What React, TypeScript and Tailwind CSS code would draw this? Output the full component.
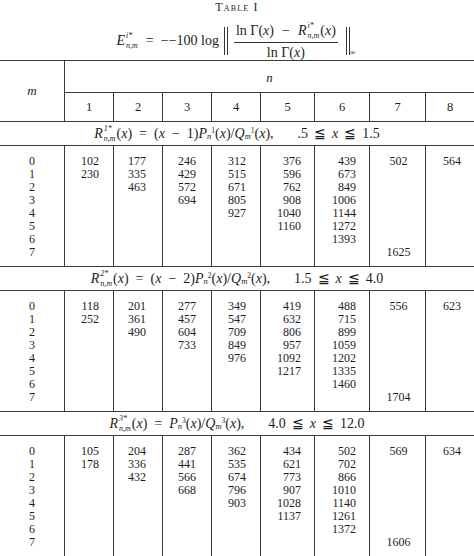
import React from 'react';

const COLS = 'grid grid-cols-[65px_49px_49px_49px_49px_54px_55px_56px_48px]';
const LINE = 'border-[#3a3a3a]';

// values per column n = 1..8, indexed by row m (null = blank)
type Col = (number | null)[];

const col = (vals: number[], last?: number): Col => {
  const out: Col = Array(8).fill(null);
  vals.forEach((v, i) => (out[i] = v));
  if (last !== undefined) out[7] = last;
  return out;
};

const SECTIONS: { key: string; cols: Col[] }[] = [
  {
    key: '1',
    cols: [
      col([102, 230]),
      col([177, 335, 463]),
      col([246, 429, 572, 694]),
      col([312, 515, 671, 805, 927]),
      col([376, 596, 762, 908, 1040, 1160]),
      col([439, 673, 849, 1006, 1144, 1272, 1393]),
      col([502], 1625),
      col([564]),
    ],
  },
  {
    key: '2',
    cols: [
      col([118, 252]),
      col([201, 361, 490]),
      col([277, 457, 604, 733]),
      col([349, 547, 709, 849, 976]),
      col([419, 632, 806, 957, 1092, 1217]),
      col([488, 715, 899, 1059, 1202, 1335, 1460]),
      col([556], 1704),
      col([623]),
    ],
  },
  {
    key: '3',
    cols: [
      col([105, 178]),
      col([204, 336, 432]),
      col([287, 441, 566, 668]),
      col([362, 535, 674, 796, 903]),
      col([434, 621, 773, 907, 1028, 1137]),
      col([502, 702, 866, 1010, 1140, 1261, 1372]),
      col([569], 1606),
      col([634]),
    ],
  },
];

// alignment of each n column, as printed
const CELL_CLASS = [
  'text-right pr-[14px]',
  'text-right pr-[16px]',
  'text-right pr-[15px]',
  'text-right pr-[14px]',
  'text-right pr-[13px]',
  'text-right pr-[13px]',
  'text-center pl-[2px]',
  'text-center pl-[4px]',
];

function Scripts({ sup, sub }: { sup: string; sub: string }) {
  return (
    <span className="mx-[1px] inline-flex flex-col align-middle text-[8px] leading-[9.5px] italic">
      <span>{sup}</span>
      <span>{sub}</span>
    </span>
  );
}

function Sub({ children }: { children: React.ReactNode }) {
  return <span className="relative top-[3px] text-[8.5px] italic">{children}</span>;
}

function Sup({ children }: { children: React.ReactNode }) {
  return <span className="relative -top-[3px] text-[7.5px]">{children}</span>;
}

function ErrorFormula() {
  return (
    <div className="flex items-center text-[14px] leading-none">
      <i>E</i>
      <Scripts sup="i*" sub="n,m" />
      <span className="mx-[7px]">=</span>
      <span>−−100 log</span>
      <span className="ml-[5px] h-[28px] w-[4px] border-x border-[#333]" />
      <span className="mx-[6px] inline-flex flex-col items-center">
        <span className="flex items-center px-[2px] pb-[2px]">
          ln Γ(<i>x</i>)<span className="mx-[8px]">−</span>
          <i>R</i>
          <Scripts sup="i*" sub="n,m" />(<i>x</i>)
        </span>
        <span className="w-full border-t border-[#333] pt-[3px] text-center">
          ln Γ(<i>x</i>)
        </span>
      </span>
      <span className="ml-[2px] h-[28px] w-[4px] border-x border-[#333]" />
      <span className="relative top-[12px] text-[8px]">∞</span>
    </div>
  );
}

function Rel() {
  return <span className="mx-[6px]">≦</span>;
}

function SectionFormula({ k }: { k: string }) {
  if (k === '1') {
    return (
      <>
        <i>R</i>
        <Scripts sup="1*" sub="n,m" />(<i>x</i>)<span className="mx-[7px]">=</span>(<i>x</i>
        <span className="mx-[7px]">−</span>1)<i>P</i>
        <Sub>n</Sub>
        <Sup>1</Sup>(<i>x</i>)/<i>Q</i>
        <Sub>m</Sub>
        <Sup>1</Sup>(<i>x</i>),
        <span className="ml-[24px]">.5</span>
        <Rel />
        <i>x</i>
        <Rel />
        1.5
      </>
    );
  }
  if (k === '2') {
    return (
      <>
        <i>R</i>
        <Scripts sup="2*" sub="n,m" />(<i>x</i>)<span className="mx-[7px]">=</span>(<i>x</i>
        <span className="mx-[7px]">−</span>2)<i>P</i>
        <Sub>n</Sub>
        <Sup>2</Sup>(<i>x</i>)/<i>Q</i>
        <Sub>m</Sub>
        <Sup>2</Sup>(<i>x</i>),
        <span className="ml-[24px]">1.5</span>
        <Rel />
        <i>x</i>
        <Rel />
        4.0
      </>
    );
  }
  return (
    <>
      <i>R</i>
      <Scripts sup="3*" sub="n,m" />(<i>x</i>)<span className="mx-[7px]">=</span>
      <i>P</i>
      <Sub>n</Sub>
      <Sup>3</Sup>(<i>x</i>)/<i>Q</i>
      <Sub>m</Sub>
      <Sup>3</Sup>(<i>x</i>),
      <span className="ml-[24px]">4.0</span>
      <Rel />
      <i>x</i>
      <Rel />
      12.0
    </>
  );
}

export default function App() {
  return (
    <div className="w-[474px] overflow-hidden bg-white font-['Liberation_Serif',serif] text-[#1d1d1d]">
      {/* caption */}
      <div className="flex h-[60px] flex-col items-center">
        <div className="mt-[1px] text-[12px] leading-[12px] tracking-[0.1em] [font-variant:small-caps]">
          Table I
        </div>
        <div className="mt-[8px] pr-[2px]">
          <ErrorFormula />
        </div>
      </div>

      {/* header */}
      <div className={`${COLS} grid-rows-[32px_28px] border-y ${LINE} text-[12.5px]`}>
        <div className={`row-span-2 flex items-center justify-center border-r ${LINE} text-[13px] italic`}>
          m
        </div>
        <div
          className={`col-span-8 flex items-center justify-center border-b ${LINE} pt-[2px] text-[13px] italic`}
        >
          n
        </div>
        {[1, 2, 3, 4, 5, 6, 7, 8].map((n) => (
          <div
            key={n}
            className={`flex items-center justify-center ${n < 8 ? `border-r ${LINE}` : ''}`}
          >
            {n}
          </div>
        ))}
      </div>

      {SECTIONS.map((s) => (
        <div key={s.key}>
          <div
            className={`flex h-[24px] items-center justify-center border-b ${LINE} text-[14px] leading-none`}
          >
            <SectionFormula k={s.key} />
          </div>
          <div className={`${COLS} border-b ${LINE} text-[12px] leading-[13px]`}>
            <div className={`border-r ${LINE} pt-[9px] pb-[7px] text-center`}>
              {[0, 1, 2, 3, 4, 5, 6, 7].map((m) => (
                <div key={m}>{m}</div>
              ))}
            </div>
            {s.cols.map((c, i) => (
              <div
                key={i}
                className={`pt-[9px] pb-[7px] ${CELL_CLASS[i]} ${i < 7 ? `border-r ${LINE}` : ''}`}
              >
                {c.map((v, m) => (
                  <div key={m}>{v === null ? '\u00a0' : v}</div>
                ))}
              </div>
            ))}
          </div>
        </div>
      ))}
    </div>
  );
}
